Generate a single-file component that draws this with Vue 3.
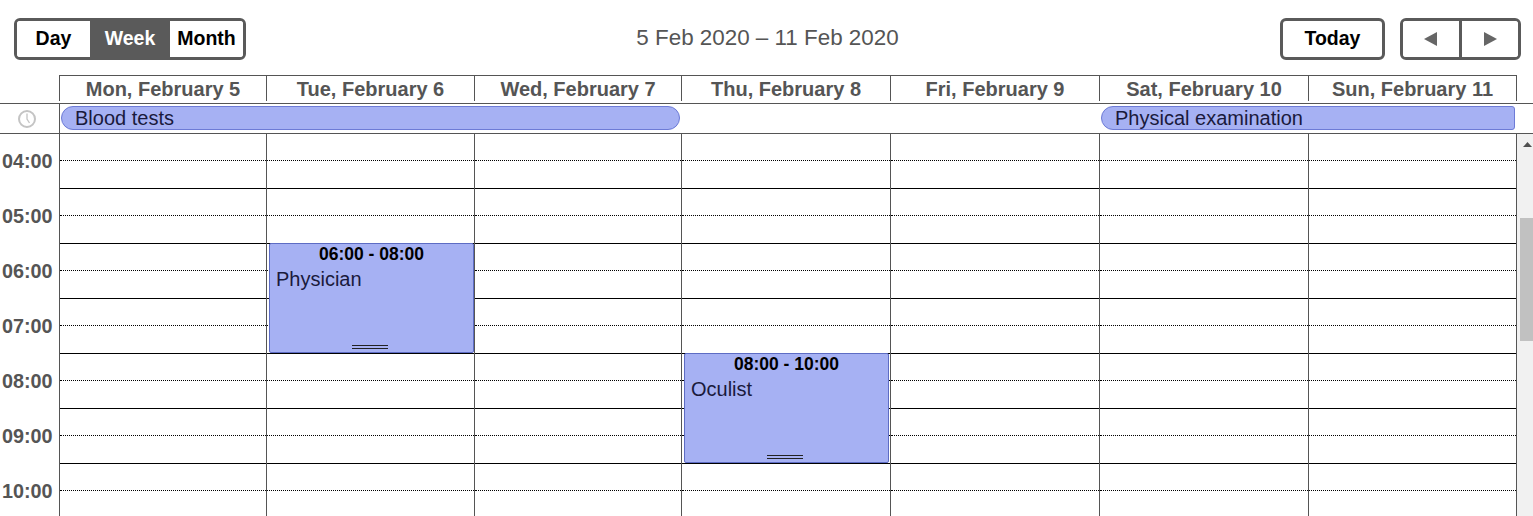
<script setup>
import { ref } from 'vue'

const views = ['Day', 'Week', 'Month']
const activeView = ref('Week')

const columns = [
  { label: 'Mon, February 5', width: 207 },
  { label: 'Tue, February 6', width: 208, event: { time: '06:00 - 08:00', title: 'Physician', row: 2 } },
  { label: 'Wed, February 7', width: 207 },
  { label: 'Thu, February 8', width: 209, event: { time: '08:00 - 10:00', title: 'Oculist', row: 4 } },
  { label: 'Fri, February 9', width: 209 },
  { label: 'Sat, February 10', width: 209 },
  { label: 'Sun, February 11', width: 208 },
]

const hours = ['04:00', '05:00', '06:00', '07:00', '08:00', '09:00', '10:00']
const rowHeight = 55
const gridColumns = '59px ' + columns.map((c) => c.width + 'px').join(' ') + ' 1fr'
</script>

<template>
  <div class="scheduler">
    <div class="toolbar">
      <div class="tabs">
        <button
          v-for="view in views"
          :key="view"
          class="tab"
          :class="{ active: activeView === view }"
          @click="activeView = view"
        >
          {{ view }}
        </button>
      </div>
      <div class="range">5 Feb 2020 – 11 Feb 2020</div>
      <div class="nav">
        <button class="today">Today</button>
        <div class="arrows">
          <button class="arrow">
            <svg width="14" height="14" viewBox="0 0 14 14"><path d="M13 0v14L0 7z" fill="#666" /></svg>
          </button>
          <button class="arrow">
            <svg width="14" height="14" viewBox="0 0 14 14"><path d="M1 0v14l13-7z" fill="#666" /></svg>
          </button>
        </div>
      </div>
    </div>

    <div class="head" :style="{ gridTemplateColumns: gridColumns }">
      <div></div>
      <div v-for="col in columns" :key="col.label" class="head-cell">{{ col.label }}</div>
      <div class="head-end"></div>
    </div>

    <div class="allday" :style="{ gridTemplateColumns: gridColumns }">
      <div class="clock">
        <svg width="20" height="20" viewBox="0 0 20 20" fill="none" stroke="#c4c4c4">
          <circle cx="10" cy="10" r="8" stroke-width="2" />
          <path d="M10 4.5V10l2.5 4" stroke-width="1.3" />
        </svg>
      </div>
      <div class="bar bar-blood">Blood tests</div>
      <div class="bar bar-exam">Physical examination</div>
    </div>

    <div class="body">
      <div class="times">
        <div v-for="hour in hours" :key="hour" class="time">{{ hour }}</div>
      </div>
      <div
        v-for="col in columns"
        :key="col.label"
        class="day"
        :style="{ width: col.width + 'px' }"
      >
        <div v-for="hour in hours" :key="hour" class="slot"></div>
        <div
          v-if="col.event"
          class="event"
          :style="{ top: col.event.row * rowHeight - 1 + 'px', height: 2 * rowHeight + 'px' }"
        >
          <div class="event-time">{{ col.event.time }}</div>
          <div class="event-title">{{ col.event.title }}</div>
          <div class="event-grip"></div>
        </div>
      </div>
      <div class="scrollbar">
        <svg class="scroll-up" width="9" height="5" viewBox="0 0 9 5"><path d="M4.500 0 9 5H0z" fill="#505050" /></svg>
        <div class="scroll-thumb"></div>
      </div>
    </div>
  </div>
</template>

<style>
html,
body {
  margin: 0;
  overflow: hidden;
  background: #fff;
}
</style>

<style scoped>
.scheduler {
  width: 1533px;
  height: 516px;
  overflow: hidden;
  font-family: 'Liberation Sans', Arial, sans-serif;
  background: #fff;
}

.toolbar {
  height: 75px;
  box-sizing: border-box;
  padding: 18px 12px 0 14px;
  display: flex;
  align-items: flex-start;
  justify-content: space-between;
}

button {
  font-family: inherit;
  padding: 0;
  margin: 0;
  background: #fff;
  cursor: pointer;
}

.tabs {
  width: 232px;
  height: 42px;
  box-sizing: border-box;
  border: 3px solid #5a5a5a;
  border-radius: 6px;
  display: flex;
  overflow: hidden;
}

.tab {
  border: 0;
  height: 36px;
  padding-bottom: 2px;
  font-size: 19.500px;
  font-weight: 700;
  color: #000;
  width: 73px;
}

.tab:nth-child(2) {
  width: 80px;
}

.tab.active {
  background: #5a5a5a;
  color: #fff;
}

.range {
  font-size: 22.400px;
  color: #555;
  line-height: 38px;
  padding-top: 1px;
  margin-left: 9px;
}

.nav {
  display: flex;
  gap: 15px;
}

.today {
  width: 105px;
  height: 42px;
  box-sizing: border-box;
  border: 3px solid #5a5a5a;
  border-radius: 6px;
  padding-bottom: 2px;
  font-size: 19.500px;
  font-weight: 700;
  color: #000;
}

.arrows {
  width: 121px;
  height: 42px;
  box-sizing: border-box;
  border: 3px solid #5a5a5a;
  border-radius: 6px;
  display: flex;
  overflow: hidden;
}

.arrow {
  flex: 1;
  border: 0;
  display: flex;
  align-items: center;
  justify-content: center;
}

.arrow + .arrow {
  border-left: 3px solid #5a5a5a;
}

.head,
.allday {
  display: grid;
  width: 1533px;
}

.head {
  height: 28px;
}

.head-cell {
  box-sizing: border-box;
  border-top: 1px solid #555;
  border-left: 1px solid #555;
  height: 26px;
  text-align: center;
  font-size: 20px;
  font-weight: 700;
  color: #555;
  line-height: 26px;
}

.head-end {
  border-left: 1px solid #555;
  height: 26px;
}

.allday {
  position: relative;
  height: 31px;
  box-sizing: border-box;
  border-top: 1px solid #555;
  border-bottom: 1px solid #555;
}

.clock {
  grid-column: 1;
  box-sizing: border-box;
  height: 29px;
  border-right: 1px solid #555;
  width: 60px;
  padding: 5px 0 0 17px;
}

.bar {
  position: absolute;
  top: 2px;
  height: 24px;
  box-sizing: border-box;
  background: #a6b1f3;
  border: 1px solid #6d7bd6;
  border-radius: 12px 3px 3px 12px;
  padding-left: 13px;
  font-size: 20px;
  line-height: 22px;
  color: #1a1a3c;
}

.bar-blood {
  left: 61px;
  width: 619px;
  border-radius: 12px;
}

.bar-exam {
  left: 1101px;
  width: 414px;
}

.body {
  display: flex;
  height: 383px;
  overflow: hidden;
}

.times {
  width: 59px;
  flex: none;
}

.time {
  height: 55px;
  box-sizing: border-box;
  padding-left: 2px;
  font-size: 19.800px;
  font-weight: 700;
  color: #555;
  line-height: 55px;
}

.day {
  position: relative;
  flex: none;
  box-sizing: border-box;
  border-left: 1px solid #555;
}

.slot {
  position: relative;
  height: 55px;
  box-sizing: border-box;
  border-bottom: 1px solid #000;
}

.slot::after {
  content: '';
  position: absolute;
  left: 0;
  right: 0;
  top: 26px;
  border-top: 1px dotted #000;
}

.event {
  position: absolute;
  z-index: 1;
  left: 2px;
  width: 205px;
  box-sizing: border-box;
  background: #a6b1f3;
  border: 1px solid #5d6cc4;
  border-radius: 2px;
  color: #1a1a3c;
}

.event-time {
  text-align: center;
  font-size: 17.500px;
  font-weight: 700;
  color: #000;
  line-height: 19px;
  padding-top: 1px;
}

.event-title {
  font-size: 20px;
  line-height: 24px;
  padding: 3px 0 0 6px;
}

.event-grip {
  position: absolute;
  left: 82px;
  bottom: 3px;
  width: 36px;
  height: 2px;
  border-top: 1px solid #222;
  border-bottom: 1px solid #222;
}

.scrollbar {
  position: relative;
  flex: 1;
  border-left: 1px solid #555;
  background: #f1f1f1;
}

.scroll-up {
  position: absolute;
  top: 8px;
  left: 6px;
}

.scroll-thumb {
  position: absolute;
  top: 84px;
  left: 3px;
  right: 0;
  height: 123px;
  background: #c1c1c1;
}
</style>
